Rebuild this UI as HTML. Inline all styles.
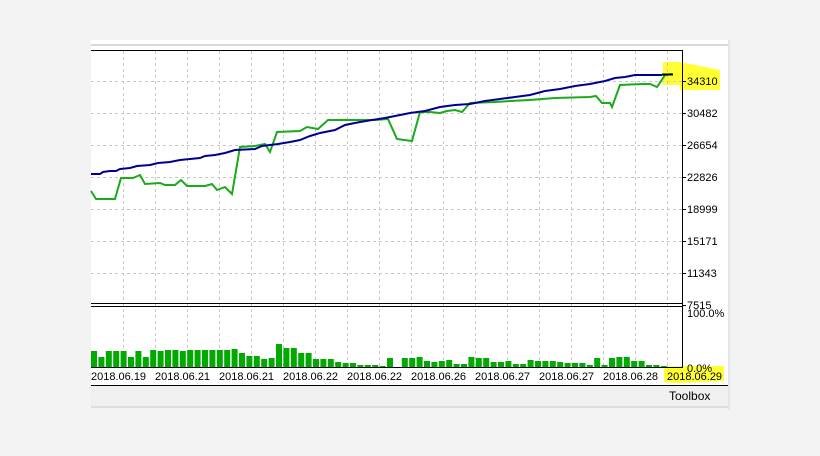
<!DOCTYPE html>
<html><head><meta charset="utf-8"><style>
html,body{margin:0;padding:0;background:#f3f3f3;}
body{width:820px;height:456px;overflow:hidden;position:relative;font-family:"Liberation Sans",sans-serif;}
svg{position:absolute;left:0;top:0}
text{font-family:"Liberation Sans",sans-serif;font-size:11px;fill:#000}
</style></head><body>
<svg width="820" height="456" viewBox="0 0 820 456">
<rect x="91" y="40" width="637" height="346" fill="#fff"/>
<rect x="91" y="44" width="637" height="2" fill="#d8d8d8"/>
<rect x="91" y="386" width="637" height="20" fill="#f0f0f0"/>
<rect x="91" y="406" width="637" height="2" fill="#ddd"/>
<rect x="728" y="40" width="2" height="370" fill="#e6e6e6"/>
<!-- yellow highlights -->
<polygon points="663,62 680,62 720,70 720,90 685,90 680,90 680,85 663,85" fill="#ffff33"/>
<polygon points="664,366 724,366 724,381 676,383 664,382" fill="#ffff33"/>
<g stroke="#c8c8c8" stroke-dasharray="3,3" stroke-width="1">
<line x1="91" y1="81.5" x2="682" y2="81.5"/><line x1="91" y1="113.5" x2="682" y2="113.5"/>
<line x1="91" y1="145.5" x2="682" y2="145.5"/><line x1="91" y1="177.5" x2="682" y2="177.5"/>
<line x1="91" y1="209.5" x2="682" y2="209.5"/><line x1="91" y1="241.5" x2="682" y2="241.5"/>
<line x1="91" y1="273.5" x2="682" y2="273.5"/>
<g id="v"></g>
</g>
<g id="bars" fill="#00aa00"></g>
<!-- frame -->
<g stroke="#000" stroke-width="1" fill="none">
<line x1="91" y1="50.5" x2="682.5" y2="50.5"/>
<line x1="682.5" y1="50" x2="682.5" y2="368"/>
<line x1="91" y1="303.5" x2="682.5" y2="303.5"/>
<line x1="91" y1="306.5" x2="682.5" y2="306.5"/>
<line x1="91" y1="367.5" x2="682.5" y2="367.5"/>
<line x1="91" y1="385.5" x2="728" y2="385.5"/>
</g>
<g stroke="#000"><line x1="682" y1="81.5" x2="686" y2="81.5"/><line x1="682" y1="113.5" x2="686" y2="113.5"/><line x1="682" y1="145.5" x2="686" y2="145.5"/><line x1="682" y1="177.5" x2="686" y2="177.5"/><line x1="682" y1="209.5" x2="686" y2="209.5"/><line x1="682" y1="241.5" x2="686" y2="241.5"/><line x1="682" y1="273.5" x2="686" y2="273.5"/><line x1="682" y1="305.5" x2="686" y2="305.5"/></g>
<polyline fill="none" stroke="#1aaa1a" stroke-width="2" points="91,191 96,199 115,199 121,178 133,178 140,175 145,184 160,183 165,185 175,185 181,180 187,186 205,186 212,184 217,190 225,187 232,194 240,147 255,146 265,144 270,152 277,132 300,131 307,127 318,129 328,120 375,120 388,119 397,139 412,141 420,112 430,112 440,113 447,111 455,110 462,112 470,103 495,102 510,101 530,100 555,98 590,97 596,96 602,103 610,103 612,107 620,85 643,84 650,84 657,87 665,75 672,74"/>
<polyline fill="none" stroke="#000090" stroke-width="2" points="91,174 100,174 103,172 110,171 116,171 120,169 130,168 137,166 150,165 158,163 170,162 180,160 200,158 205,156 215,155 225,153 235,150 255,149 262,146 278,144 290,142 300,140 310,136 320,133 335,130 345,125 360,122 372,120 385,118 400,115 410,113 425,111 440,107 455,105 470,104 485,101 500,99 515,97 530,95 545,91 560,89 575,86 590,84 605,81 615,78 625,77 635,75 662,75"/>
<line x1="662" y1="74.5" x2="673" y2="74.5" stroke="#000" stroke-width="2"/>
<g>
<text x="687" y="85">34310</text><text x="687" y="117">30482</text><text x="687" y="149">26654</text>
<text x="687" y="181">22826</text><text x="687" y="213">18999</text><text x="687" y="245">15171</text>
<text x="687" y="277">11343</text><text x="687" y="309">7515</text>
<text x="687" y="317">100.0%</text><text x="687" y="372">0.0%</text>
<text x="91" y="380">2018.06.19</text><text x="155" y="380">2018.06.21</text><text x="219" y="380">2018.06.21</text>
<text x="283" y="380">2018.06.22</text><text x="347" y="380">2018.06.22</text><text x="411" y="380">2018.06.26</text>
<text x="475" y="380">2018.06.27</text><text x="539" y="380">2018.06.27</text><text x="603" y="380">2018.06.28</text>
<text x="667" y="380">2018.06.29</text>
<text x="669" y="400" style="font-size:12px">Toolbox</text>
</g>
</svg>
<script>
var ns="http://www.w3.org/2000/svg";
var v=document.getElementById('v');
for(var x=123;x<682;x+=32){var l=document.createElementNS(ns,'line');l.setAttribute('x1',x+.5);l.setAttribute('x2',x+.5);l.setAttribute('y1',51);l.setAttribute('y2',367);v.appendChild(l);}
var h=[16,10,16,16,16,10,16,10,17,16,17,17,16,17,17,17,17,17,17,18,14,11,11,8,9,23,19,19,14,14,8,8,8,5,4,4,2,2,2,1,9,0,9,9,10,6,5,6,7,3,3,10,9,9,5,5,6,3,3,7,6,6,6,5,4,4,4,2,9,2,9,10,10,6,6,2,2,1];
var b=document.getElementById('bars');
for(var i=0;i<h.length;i++){if(!h[i])continue;var r=document.createElementNS(ns,'rect');r.setAttribute('x',91+i*7.4);r.setAttribute('width',6);r.setAttribute('y',367-h[i]);r.setAttribute('height',h[i]);b.appendChild(r);}
</script>
</body></html>
